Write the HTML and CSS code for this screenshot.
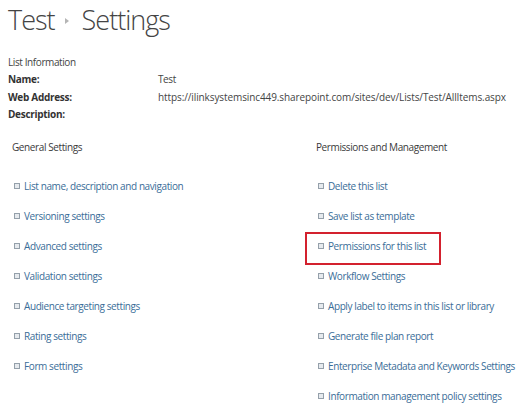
FILE: index.html
```html
<!DOCTYPE html>
<html>
<head>
<meta charset="utf-8">
<link rel="stylesheet" href="styles.css">
</head>
<body>
<div class="page">
  <h1 class="title"><span>Test</span><span class="crumb"></span><span>Settings</span></h1>

  <section class="info">
    <div class="info-head">List Information</div>
    <div class="info-row"><span class="label">Name:</span><span class="value">Test</span></div>
    <div class="info-row"><span class="label">Web Address:</span><span class="value url">https://ilinksystemsinc449.sharepoint.com/sites/dev/Lists/Test/AllItems.aspx</span></div>
    <div class="info-row"><span class="label">Description:</span><span class="value"></span></div>
  </section>

  <div class="columns">
    <div class="col">
      <div class="col-head">General Settings</div>
      <ul class="links">
        <li><a>List name, description and navigation</a></li>
        <li><a>Versioning settings</a></li>
        <li><a>Advanced settings</a></li>
        <li><a>Validation settings</a></li>
        <li><a>Audience targeting settings</a></li>
        <li><a>Rating settings</a></li>
        <li><a>Form settings</a></li>
      </ul>
    </div>
    <div class="col">
      <div class="col-head">Permissions and Management</div>
      <ul class="links">
        <li><a>Delete this list</a></li>
        <li><a>Save list as template</a></li>
        <li class="highlight"><a>Permissions for this list</a></li>
        <li><a>Workflow Settings</a></li>
        <li><a>Apply label to items in this list or library</a></li>
        <li><a>Generate file plan report</a></li>
        <li><a>Enterprise Metadata and Keywords Settings</a></li>
        <li><a>Information management policy settings</a></li>
      </ul>
    </div>
  </div>
</div>
</body>
</html>
```

FILE: styles.css
```css
* { box-sizing: border-box; }
html, body { margin: 0; padding: 0; background: #fff; }
body {
  font-family: "Open Sans", "Noto Sans", sans-serif;
  color: #444;
  font-size: 10px;
  letter-spacing: -0.4px;
}
.page { padding: 0 8px; }

.title {
  margin: 0;
  height: 40px;
  display: flex;
  align-items: center;
  font-weight: 300;
  font-size: 27px;
  letter-spacing: -1px;
  color: #444;
  line-height: 36px;
}
.crumb {
  width: 0; height: 0;
  border-left: 4px solid #b5b5b5;
  border-top: 3px solid transparent;
  border-bottom: 3px solid transparent;
  margin: 2px 13px 0 10px;
}

.info { margin-top: 13px; }
.info-head { height: 18px; line-height: 18px; color: #444; }
.info-row { display: flex; height: 17.5px; line-height: 17.5px; }
.label { width: 150px; font-weight: 700; color: #333; letter-spacing: -0.3px; }
.value { color: #444; white-space: nowrap; }
.value.url { letter-spacing: -0.1px; }

.columns {
  display: grid;
  grid-template-columns: 304px 1fr;
  padding-left: 4px;
  margin-top: 13px;
}
.col-head { height: 20px; line-height: 20px; color: #3a3a3a; }
.links { list-style: none; margin: 0; padding: 0; margin-top: 14px; }
.links li {
  height: 30px;
  display: flex;
  align-items: center;
  padding-left: 2px;
  position: relative;
}
.links li::before {
  content: "";
  width: 4px; height: 4px;
  border: 1px solid #95a0aa;
  background: #e6eaee;
  margin-right: 4px;
  flex: none;
}
.links a { color: #3a6d98; white-space: nowrap; }
.links li.highlight::after {
  content: "";
  position: absolute;
  left: -11px; top: 1px;
  width: 132px; height: 29px;
  border: 2px solid #d3212e;
}
```
